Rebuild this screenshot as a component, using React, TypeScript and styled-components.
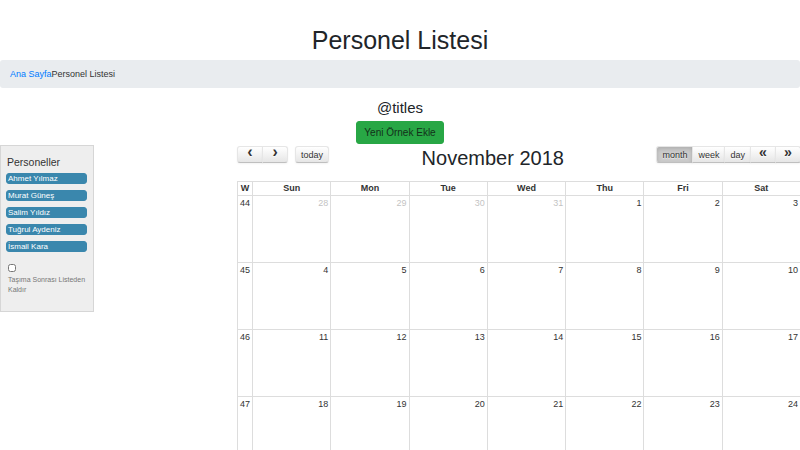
import React from "react";
import styled, { createGlobalStyle, css } from "styled-components";

const GlobalStyle = createGlobalStyle`
  html, body { margin: 0; padding: 0; overflow: hidden; background: #fff; }
  body { font-family: "Liberation Sans", Arial, sans-serif; color: #212529; }
  * { box-sizing: border-box; }
`;

const Page = styled.div`
  width: 800px;
  height: 450px;
  overflow: hidden;
`;

const Title = styled.h1`
  margin: 0;
  padding-top: 25px;
  height: 60px;
  font-size: 25px;
  line-height: 30px;
  font-weight: 400;
  text-align: center;
  color: #212529;
`;

const Breadcrumb = styled.nav`
  display: flex;
  align-items: center;
  height: 28px;
  padding: 0 10px;
  background: #e9ecef;
  border-radius: 3px;
  font-size: 9px;
`;

const Crumb = styled.span<{ $link?: boolean }>`
  color: ${(p) => (p.$link ? "#007bff" : "#333")};
`;

const Subtitle = styled.div`
  margin-top: 11px;
  font-size: 15px;
  line-height: 18px;
  text-align: center;
  color: #212529;
`;

const AddRow = styled.div`
  display: flex;
  justify-content: center;
  margin-top: 4px;
`;

const AddButton = styled.button`
  height: 23px;
  width: 88px;
  padding: 0;
  border: 1px solid #28a745;
  border-radius: 3px;
  background: #28a745;
  color: #13301a;
  font-family: inherit;
  font-size: 10px;
`;

const Main = styled.div`
  display: flex;
  align-items: flex-start;
  margin-top: 1px;
`;

const Sidebar = styled.aside`
  width: 94px;
  flex: none;
  padding: 10px 6px 16px 5px;
  background: #eeeeee;
  border: 1px solid #d6d6d6;
`;

const SideTitle = styled.h4`
  margin: 0 0 5px 1px;
  font-size: 10.5px;
  line-height: 12px;
  font-weight: 400;
  color: #333;
`;

const EventChip = styled.div`
  height: 11px;
  margin-bottom: 6px;
  padding-left: 1px;
  background: #3a87ad;
  border: 1px solid #3a87ad;
  border-radius: 3px;
  color: #fff;
  font-size: 8px;
  line-height: 9px;
  white-space: nowrap;
  overflow: hidden;
`;

const Check = styled.input`
  display: block;
  width: 8px;
  height: 8px;
  margin: 12px 0 0 2px;
`;

const CheckLabel = styled.div`
  margin: 3px 0 0 2px;
  font-size: 7px;
  line-height: 10px;
  color: #777;
`;

const Calendar = styled.div`
  width: 564px;
  flex: none;
  margin-left: 143px;
  margin-top: 1px;
`;

const Toolbar = styled.div`
  display: flex;
  align-items: flex-start;
  margin-bottom: 11px;
`;

const Group = styled.div`
  display: flex;
`;

const ToolTitle = styled.h2`
  flex: 1;
  margin: 0;
  font-size: 20px;
  line-height: 24px;
  font-weight: 400;
  text-align: center;
  color: #212529;
`;

const FcButton = styled.button<{ $active?: boolean; $gap?: boolean; $first?: boolean; $last?: boolean }>`
  height: 17px;
  padding: 0 5px;
  margin-left: ${(p) => (p.$gap ? "7px" : p.$first ? "0" : "-1px")};
  font-family: "Liberation Sans", Arial, sans-serif;
  font-size: 9px;
  color: #333;
  border: 1px solid;
  border-color: #e6e6e6 #e6e6e6 #bfbfbf;
  border-radius: ${(p) =>
    p.$first && p.$last ? "3px" : p.$first ? "3px 0 0 3px" : p.$last ? "0 3px 3px 0" : "0"};
  background-color: #f5f5f5;
  background-image: linear-gradient(to bottom, #ffffff, #e6e6e6);
  text-shadow: 0 1px 1px rgba(255, 255, 255, 0.75);
  box-shadow: inset 0 1px 0 rgba(255, 255, 255, 0.2), 0 1px 2px rgba(0, 0, 0, 0.05);
  ${(p) =>
    p.$active &&
    css`
      background-color: #cccccc;
      background-image: none;
      box-shadow: inset 0 2px 4px rgba(0, 0, 0, 0.15), 0 1px 2px rgba(0, 0, 0, 0.05);
    `}
`;

const Icon = styled.span<{ $double?: boolean }>`
  display: inline-block;
  width: ${(p) => (p.$double ? "14px" : "14px")};
  text-align: center;
  font-family: "Liberation Mono", "Courier New", monospace;
  font-weight: bold;
  font-size: ${(p) => (p.$double ? "14px" : "16px")};
  line-height: 10px;
  position: relative;
  top: -1px;
`;

const Grid = styled.div`
  display: grid;
  grid-template-columns: 15px repeat(7, 1fr);
  border-left: 1px solid #ddd;
  border-top: 1px solid #ddd;
`;

const HeadCell = styled.div`
  height: 14px;
  border-right: 1px solid #ddd;
  border-bottom: 1px solid #ddd;
  font-size: 9px;
  line-height: 13px;
  font-weight: bold;
  text-align: center;
  color: #333;
`;

const DayCell = styled.div<{ $other?: boolean }>`
  height: 67px;
  padding: 2px 2px 0 0;
  border-right: 1px solid #ddd;
  border-bottom: 1px solid #ddd;
  font-size: 9px;
  line-height: 11px;
  text-align: right;
  color: #333;
  span {
    opacity: ${(p) => (p.$other ? 0.3 : 1)};
  }
`;

const WeekCell = styled.div`
  height: 67px;
  padding-top: 2px;
  border-right: 1px solid #ddd;
  border-bottom: 1px solid #ddd;
  font-size: 9px;
  line-height: 11px;
  text-align: center;
  color: #333;
`;

const people = ["Ahmet Yılmaz", "Murat Güneş", "Salim Yıldız", "Tuğrul Aydeniz", "İsmail Kara"];
const days = ["Sun", "Mon", "Tue", "Wed", "Thu", "Fri", "Sat"];

type Day = { n: number; other: boolean };
const weeks: { w: number; days: Day[] }[] = (() => {
  const out: { w: number; days: Day[] }[] = [];
  const start = [28, 29, 30, 31];
  const all: Day[] = start.map((n) => ({ n, other: true }));
  for (let i = 1; i <= 30; i++) all.push({ n: i, other: false });
  let d = 1;
  while (all.length < 42) all.push({ n: d++, other: true });
  for (let i = 0; i < 6; i++) out.push({ w: 44 + i, days: all.slice(i * 7, i * 7 + 7) });
  return out;
})();

export default function App() {
  return (
    <Page>
      <GlobalStyle />
      <Title>Personel Listesi</Title>
      <Breadcrumb>
        <Crumb $link>Ana Sayfa</Crumb>
        <Crumb>Personel Listesi</Crumb>
      </Breadcrumb>
      <Subtitle>@titles</Subtitle>
      <AddRow>
        <AddButton>Yeni Örnek Ekle</AddButton>
      </AddRow>
      <Main>
        <Sidebar>
          <SideTitle>Personeller</SideTitle>
          {people.map((p) => (
            <EventChip key={p}>{p}</EventChip>
          ))}
          <Check type="checkbox" />
          <CheckLabel>Taşıma Sonrası Listeden Kaldır</CheckLabel>
        </Sidebar>
        <Calendar>
          <Toolbar>
            <Group>
              <FcButton $first>
                <Icon>‹</Icon>
              </FcButton>
              <FcButton $last>
                <Icon>›</Icon>
              </FcButton>
              <FcButton $gap $first $last>
                today
              </FcButton>
            </Group>
            <ToolTitle>November 2018</ToolTitle>
            <Group>
              <FcButton $first $active>
                month
              </FcButton>
              <FcButton>week</FcButton>
              <FcButton>day</FcButton>
              <FcButton>
                <Icon $double>«</Icon>
              </FcButton>
              <FcButton $last>
                <Icon $double>»</Icon>
              </FcButton>
            </Group>
          </Toolbar>
          <Grid>
            <HeadCell>W</HeadCell>
            {days.map((d) => (
              <HeadCell key={d}>{d}</HeadCell>
            ))}
            {weeks.map((wk) => (
              <React.Fragment key={wk.w}>
                <WeekCell>{wk.w}</WeekCell>
                {wk.days.map((d, i) => (
                  <DayCell key={i} $other={d.other}>
                    <span>{d.n}</span>
                  </DayCell>
                ))}
              </React.Fragment>
            ))}
          </Grid>
        </Calendar>
      </Main>
    </Page>
  );
}
